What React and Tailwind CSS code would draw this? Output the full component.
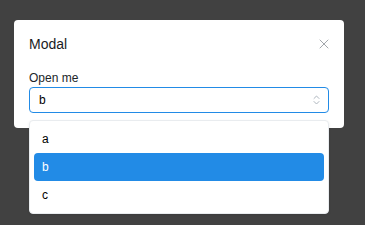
import { X } from "lucide-react";

function UpDown() {
  return (
    <svg width="7" height="10" viewBox="0 0 7 10" fill="none" stroke="#adb5bd" strokeWidth="1" strokeLinecap="round" strokeLinejoin="round">
      <path d="M1 3.5 L3.5 1 L6 3.5" />
      <path d="M1 6.5 L3.5 9 L6 6.5" />
    </svg>
  );
}

export default function App() {
  const options = ["a", "b", "c"];
  return (
    <div
      className="h-[225px] w-[365px] overflow-hidden bg-[#414141] pt-5"
      style={{ fontFamily: '"Liberation Sans", Arial, sans-serif' }}
    >
      <div className="relative ml-[14px] w-[330px] rounded-[4px] bg-white px-[15px] pb-[15px] pt-[14px]">
        <div className="flex h-5 items-center justify-between">
          <h2 className="text-[14px] text-[#1a1b1e]">Modal</h2>
          <button type="button" className="mr-[-3px] text-[#8a8f96]" aria-label="Close">
            <X className="h-4 w-4" strokeWidth={1.2} />
          </button>
        </div>

        <div className="mt-[16px]">
          <label className="block text-[12px] leading-4 text-[#212529]">Open me</label>
          <div className="mt-[1px] flex h-[26px] items-center justify-between rounded-[4px] border border-[#228be6] pl-[9px] pr-[8px]">
            <span className="text-[12px] text-[#000]">b</span>
            <UpDown />
          </div>
        </div>

        <div className="absolute left-[15px] right-[15px] top-[100px] z-10 rounded-[4px] border border-[#e9ecef] bg-white p-1 shadow-[0_1px_3px_rgba(0,0,0,0.08)]">
          {options.map((o) => (
            <div
              key={o}
              className={
                o === "b"
                  ? "flex h-7 items-center rounded-[4px] bg-[#228be6] px-2 text-[12px] text-white"
                  : "flex h-7 items-center px-2 text-[12px] text-[#000]"
              }
            >
              {o}
            </div>
          ))}
        </div>
      </div>
    </div>
  );
}
